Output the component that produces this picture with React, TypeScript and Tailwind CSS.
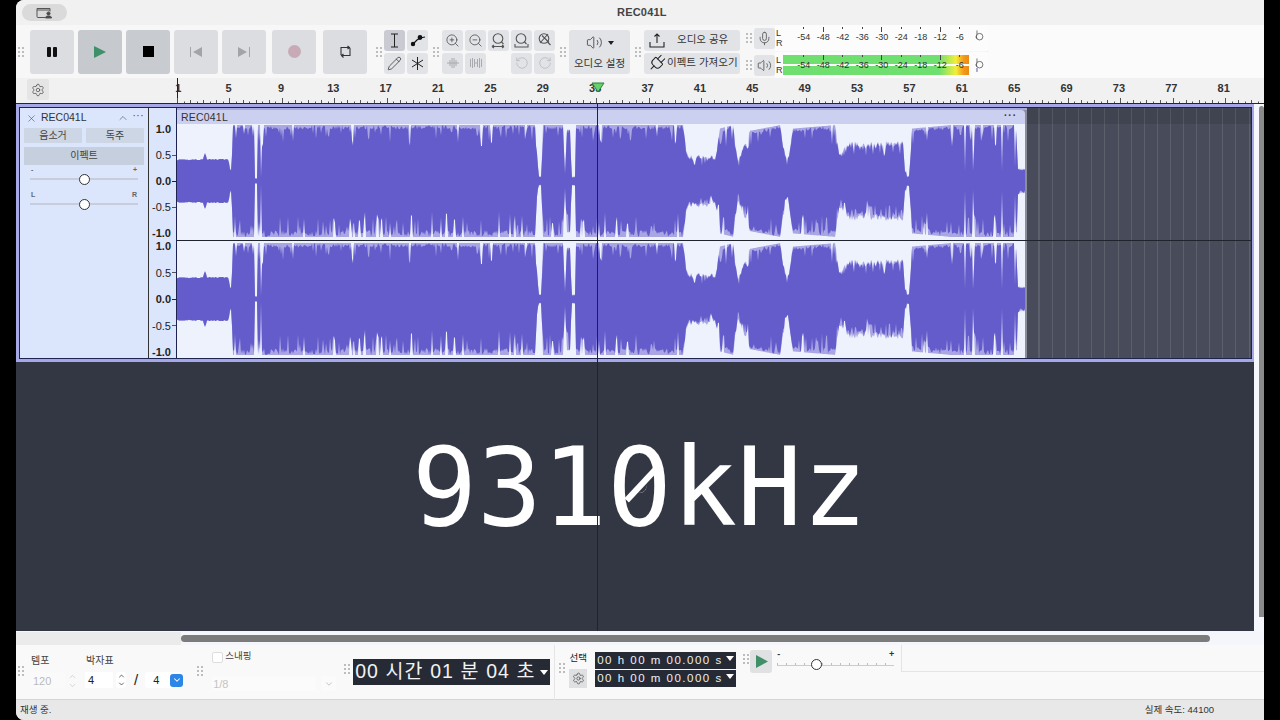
import React from 'react';
import { Mic, Pencil, Plug, RotateCcw, RotateCw, Settings, Volume2, ZoomIn, ZoomOut, ChevronDown, ChevronUp, X } from 'lucide-react';

const SANS = "[font-family:'Liberation_Sans','Noto_Sans_CJK_KR',sans-serif]";

// peak envelope of the clip, x is page pixel, amp is 0..1
const ENVELOPE: [number, number][] = [
  [177, 0.37], [203, 0.38], [205, 0.5], [207, 0.38], [228, 0.38], [231, 0.2], [233, 0.98], [254, 0.98], [255, 0.05], [257, 0.05], [258, 0.98],
  [260, 0.98], [261, 0.05], [262, 0.98], [535, 0.98], [537, 0.5], [539, 0.08], [541, 0.08], [543, 0.98], [563, 0.98],
  [565, 0.14], [567, 0.9], [570, 0.9], [572, 0.08], [575, 0.08], [576, 0.98], [683, 0.98], [687, 0.5], [689, 0.46],
  [716, 0.46], [720, 0.92], [733, 0.98], [738, 0.35], [742, 0.55], [750, 0.88], [780, 0.98], [787, 0.33], [793, 0.92],
  [835, 0.98], [840, 0.46], [848, 0.7], [903, 0.7], [905, 0.3], [907, 0.08], [909, 0.1], [912, 0.92], [950, 0.98],
  [964, 0.98], [965, 0.2], [966, 0.98], [972, 0.98], [973, 0.2], [975, 0.98], [1001, 0.98], [1002, 0.2], [1003, 0.98],
  [1014, 0.98], [1015, 0.25], [1016, 0.9], [1017, 0.9], [1018, 0.24], [1025, 0.22],
];

const envAt = (x: number) => {
  for (let i = 1; i < ENVELOPE.length; i++) {
    const [x1, a1] = ENVELOPE[i];
    if (x <= x1) {
      const [x0, a0] = ENVELOPE[i - 1];
      return a0 + ((a1 - a0) * (x - x0)) / (x1 - x0 || 1);
    }
  }
  return 0.2;
};

let seed = 41;
const rnd = () => {
  seed = (seed * 16807) % 2147483647;
  return seed / 2147483647;
};

const buildWave = () => {
  const lightTop: number[] = [];
  const lightBot: number[] = [];
  const darkTop: number[] = [];
  const darkBot: number[] = [];
  let gapTop = 0;
  let gapBot = 0;
  for (let x = 177; x <= 1025; x++) {
    const env = envAt(x);
    if (x < 229) {
      // quiet intro stays almost flat
      const n = 0.97 + rnd() * 0.05;
      lightTop.push(env * n);
      lightBot.push(env * n);
      darkTop.push(env * n);
      darkBot.push(env * n);
      continue;
    }
    if (gapTop > 0) gapTop--;
    else if (rnd() < 0.04) gapTop = 1 + Math.floor(rnd() * 2);
    if (gapBot > 0) gapBot--;
    else if (rnd() < 0.06) gapBot = 1 + Math.floor(rnd() * 2);
    const tops = gapTop > 0 ? 0.6 + rnd() * 0.2 : 0.92 + rnd() * 0.08;
    const bots = gapBot > 0 ? 0.52 + rnd() * 0.25 : 0.88 + rnd() * 0.12;
    const soft = env < 0.8 ? 0.82 + rnd() * 0.2 : 1;
    lightTop.push(env * soft * (gapTop > 0 ? tops : 1));
    lightBot.push(env * soft * (gapBot > 0 ? bots : 1));
    darkTop.push(env * soft * (rnd() < 0.12 ? 0.68 + rnd() * 0.2 : tops));
    darkBot.push(env * soft * (rnd() < 0.15 ? 0.62 + rnd() * 0.2 : bots));
  }
  const toPath = (top: number[], bot: number[], cy: number) => {
    const a = top.map((v, i) => `${i},${(cy - v * 57).toFixed(1)}`);
    const b = bot.map((v, i) => `${i},${(cy + v * 57).toFixed(1)}`).reverse();
    return `M${a.join('L')}L${b.join('L')}Z`;
  };
  return {
    light: [toPath(lightTop, lightBot, 57), toPath(lightTop, lightBot, 175)].join(''),
    dark: [toPath(darkTop, darkBot, 57), toPath(darkTop, darkBot, 175)].join(''),
  };
};

const WAVE = buildWave();

const Grip = ({ className = '' }: { className?: string }) => (
  <div className={`grid grid-cols-2 gap-x-[2px] gap-y-[2px] w-[6px] h-[10px] shrink-0 ${className}`}>
    {[0, 1, 2, 3, 4, 5].map((i) => (
      <span key={i} className="w-[2px] h-[2px] bg-[#bdbdbd]" />
    ))}
  </div>
);

const BigButton = ({ className = 'bg-[#dcdde1]', children }: { className?: string; children?: React.ReactNode }) => (
  <div className={`w-[44px] h-[44px] rounded-[3px] flex items-center justify-center shrink-0 ${className}`}>{children}</div>
);

const SmallButton = ({ className = 'bg-[#e2e3e6]', children }: { className?: string; children?: React.ReactNode }) => (
  <div className={`w-[21px] h-[21px] rounded-[3px] flex items-center justify-center ${className}`}>{children}</div>
);

const ZoomFit = ({ kind }: { kind: number }) => (
  <svg width="17" height="17" viewBox="0 0 17 17" fill="none" stroke="#555" strokeWidth="1.1">
    <circle cx="8" cy="6.500" r="4.800" />
    {kind === 0 && <path d="M11.500 10l2 2M2 14.500h12M2 14.500l2-1.500M2 14.500l2 1.500M14 14.500l-2-1.500M14 14.500l-2 1.500" />}
    {kind === 1 && <path d="M11.500 10l2 2M2 12v3h13v-3" />}
    {kind === 2 && <path d="M11.500 10l3 3M4 11l8-9M6 3.500l7 7" />}
  </svg>
);

const Meter = ({ playing }: { playing?: boolean }) => {
  const labels = ['-54', '-48', '-42', '-36', '-30', '-24', '-18', '-12', '-6'];
  return (
    <div className="relative h-[26px] w-[213px] bg-[#fcfcfc] flex items-center">
      <div className="w-[7px] ml-px text-[9px] leading-[10px] text-[#333]">
        L<br />R
      </div>
      <div className={`relative w-[202px] h-[20px] ${playing ? '' : '-mt-[3px]'}`}>
        {playing && (
          <div className="absolute inset-y-0 left-0 w-[186px] flex flex-col gap-[2px]">
            <div className="h-[9px] bg-[linear-gradient(90deg,#6fe06f_0,#6fe06f_84%,#f2ef3a_93%,#f59a1a_97%,#e88a15_100%)]" />
            <div className="h-[9px] bg-[linear-gradient(90deg,#6fe06f_0,#6fe06f_84%,#f2ef3a_93%,#f59a1a_97%,#e88a15_100%)]" />
          </div>
        )}
        <div className="absolute inset-0 pl-[11px] flex">
          {labels.map((l, i) => (
            <div key={l} className="w-[19.5px] flex flex-col items-center shrink-0">
              <span className={`w-px bg-[#444] ${i % 3 === 1 ? 'h-[5px]' : 'h-[2px]'}`} />
              <span className={`text-[9px] leading-[11px] text-[#333] ${i % 3 === 1 ? 'mt-0' : 'mt-[3px]'}`}>{l}</span>
            </div>
          ))}
          <svg width="16" height="22" viewBox="0 0 16 22" fill="none" className="-mt-[1px] ml-[5px]" stroke="#333" strokeWidth="1">
            <path d="M3 1v7" />
            <circle cx="7" cy="10.500" r="5" fill="#fcfcfc" />
            <path d="M2.500 8.500a4 4 0 0 0 0 5" />
            {playing && <path d="M3 15.500v6" stroke="#5a55a8" strokeWidth="1.500" />}
          </svg>
        </div>
      </div>
    </div>
  );
};

const Slider = ({ left, right, thumb = 49 }: { left: string; right: string; thumb?: number }) => (
  <div className="px-[10px]">
    <div className="flex justify-between text-[7px] leading-[8px] text-[#666] font-bold px-px">
      <span>{left}</span>
      <span>{right}</span>
    </div>
    <div className="relative h-[10px] flex items-center">
      <div className="w-full h-[2px] bg-[#c6cede]" />
      <div style={{ left: thumb }} className="absolute w-[11px] h-[11px] rounded-full bg-white border border-[#333]" />
    </div>
  </div>
);

const VLabels = ({ items, className }: { items: [string, string][]; className: string }) => (
  <div className={`flex flex-col justify-between ${className}`}>
    {items.map(([t, tick]) => (
      <div key={t} className="h-[12px] flex items-center justify-end">
        <span className={`text-[11px] leading-[12px] text-[#222] ${t.includes('5') ? 'font-medium' : 'font-bold'}`}>{t}</span>
        <span className={`ml-[1px] w-[4px] h-px ${tick}`} />
      </div>
    ))}
  </div>
);

const TimeBox = ({ text }: { text: string }) => (
  <div className="w-[141px] h-[17px] bg-[#262a35] text-[#efefef] flex items-center pl-[2px] text-[11.5px] tracking-[1.5px] leading-none whitespace-nowrap relative">
    {text}
    <span className="absolute right-[2px] top-[4px] w-0 h-0 border-x-[4px] border-x-transparent border-t-[5px] border-t-white" />
  </div>
);

export default function App() {
  const bars = Array.from({ length: 21 }, (_, i) => 1 + i * 4);
  const ticks = Array.from({ length: 166 }, (_, i) => i);

  return (
    <div className={`w-[1280px] h-[720px] bg-black overflow-hidden pl-[16px] pr-[16px] ${SANS}`}>
      <div className="w-[1248px] h-[720px] flex flex-col bg-[#f4f4f4] rounded-tl-[8px] rounded-bl-[8px] overflow-hidden">
        {/* title bar */}
        <div className="h-[25px] bg-[#f1f1f1] flex items-center shrink-0 relative">
          <div className="ml-[6px] w-[45px] h-[17px] rounded-full bg-[#dadada] flex items-center justify-center">
            <svg width="18" height="12" viewBox="0 0 18 12" fill="none" stroke="#555" strokeWidth="1">
              <path d="M9 10.500H2a1 1 0 0 1-1-1v-8h13v3" />
              <path d="M1 3h13" />
              <circle cx="12.500" cy="6.500" r="1.600" fill="#444" />
              <path d="M9.500 11c0-1.500 1-2 3-2s3 .5 3 2z" fill="#444" />
            </svg>
          </div>
          <div className="absolute left-[601px] top-[4px] text-[11px] font-bold text-[#444] tracking-[0.2px]">REC041L</div>
        </div>

        {/* tool bar */}
        <div className="h-[53px] bg-[#f7f7f7] flex items-center shrink-0">
          <Grip className="ml-[2px]" />
          <div className="ml-[6px] flex gap-[4px]">
            <BigButton>
              <svg width="12" height="12" viewBox="0 0 12 12" fill="#111">
                <rect x="1" y="1" width="4" height="10" rx="1" />
                <rect x="7" y="1" width="4" height="10" rx="1" />
              </svg>
            </BigButton>
            <BigButton className="bg-[#c6c9ce]">
              <svg width="14" height="14" viewBox="0 0 14 14" fill="#3f9068">
                <path d="M1 1l12 6-12 6z" />
              </svg>
            </BigButton>
            <BigButton className="bg-[#c8cbd0]">
              <div className="w-[11px] h-[11px] bg-black" />
            </BigButton>
            <BigButton>
              <svg width="14" height="12" viewBox="0 0 14 12" fill="#a2a4a8">
                <rect x="1" y="1" width="1" height="10" />
                <path d="M13 1v10L4 6z" />
              </svg>
            </BigButton>
            <BigButton>
              <svg width="14" height="12" viewBox="0 0 14 12" fill="#a2a4a8">
                <rect x="12" y="1" width="1" height="10" />
                <path d="M1 1v10l9-5z" />
              </svg>
            </BigButton>
          </div>
          <BigButton className="ml-[6px] bg-[#dcdde1]">
            <div className="w-[13px] h-[13px] rounded-full bg-[#c8aab6]" />
          </BigButton>
          <BigButton className="ml-[7px] bg-[#dcdde1]">
            <svg width="15" height="15" viewBox="0 0 15 15" fill="none" stroke="#333" strokeWidth="1.100">
              <path d="M3 11V3.500h8M9.500 2l2 1.500-2 1.500M12 4v7.500H4M5.500 13.500l-2-2 2-1.500" />
            </svg>
          </BigButton>
          <Grip className="ml-[9px]" />
          <div className="ml-[2px] grid grid-cols-2 gap-[2px]">
            <SmallButton className="bg-[#c9cad2]">
              <svg width="13" height="15" viewBox="0 0 13 15" fill="none" stroke="#222" strokeWidth="1">
                <path d="M3 1h7M3 14h7M6.500 1v13" />
              </svg>
            </SmallButton>
            <SmallButton>
              <svg width="16" height="14" viewBox="0 0 16 14" fill="none" stroke="#111" strokeWidth="1.200">
                <path d="M2 12l5-5 3-2 5-1" />
                <circle cx="3" cy="11" r="1.600" fill="#111" />
                <circle cx="10" cy="4.500" r="1.800" fill="#111" />
              </svg>
            </SmallButton>
            <SmallButton>
              <Pencil size={15} strokeWidth={1.1} color="#222" />
            </SmallButton>
            <SmallButton>
              <svg width="15" height="15" viewBox="0 0 15 15" fill="none" stroke="#222" strokeWidth="1">
                <path d="M7.500 1v13M2 4l11 7M13 4L2 11" />
              </svg>
            </SmallButton>
          </div>
          <Grip className="ml-[5px]" />
          <div className="ml-[3px] grid grid-cols-5 gap-[2px]">
            <SmallButton>
              <ZoomIn size={15} strokeWidth={1.2} color="#444" />
            </SmallButton>
            <SmallButton>
              <ZoomOut size={15} strokeWidth={1.2} color="#444" />
            </SmallButton>
            <SmallButton>
              <ZoomFit kind={0} />
            </SmallButton>
            <SmallButton>
              <ZoomFit kind={1} />
            </SmallButton>
            <SmallButton>
              <ZoomFit kind={2} />
            </SmallButton>
            <SmallButton>
              <svg width="14" height="12" viewBox="0 0 14 12" fill="none" stroke="#a8aaae" strokeWidth="1">
                <path d="M1 6h12M4 3v6M6 1v10M8 1v10M10 3v6" />
              </svg>
            </SmallButton>
            <SmallButton>
              <svg width="14" height="12" viewBox="0 0 14 12" fill="none" stroke="#a8aaae" strokeWidth="1">
                <path d="M1.500 2v8M3.500 1v10M5.500 2v8M5.500 6h3M8.500 2v8M10.500 1v10M12.500 2v8" />
              </svg>
            </SmallButton>
            <div />
            <SmallButton>
              <RotateCcw size={14} strokeWidth={1} color="#a8aaae" />
            </SmallButton>
            <SmallButton>
              <RotateCw size={14} strokeWidth={1} color="#a8aaae" />
            </SmallButton>
          </div>
          <Grip className="ml-[5px]" />
          <div className="ml-[3px] w-[61px] h-[44px] rounded-[3px] bg-[#e2e3e6] flex flex-col items-center pt-[3px]">
            <div className="flex items-center gap-[5px] h-[20px]">
              <Volume2 size={17} strokeWidth={1.1} color="#333" />
              <span className="w-0 h-0 border-x-[3px] border-x-transparent border-t-[4px] border-t-[#222]" />
            </div>
            <span className="text-[10.5px] leading-[14px] mt-[3px] text-[#333] whitespace-nowrap">오디오 설정</span>
          </div>
          <Grip className="ml-[5px]" />
          <div className="ml-[3px] flex flex-col gap-[2px]">
            <div className="w-[96px] h-[21px] rounded-[3px] bg-[#e2e3e6] flex items-center pl-[5px]">
              <svg width="16" height="16" viewBox="0 0 16 16" fill="none" stroke="#222" strokeWidth="1.100">
                <path d="M1 10v5h14v-5M8 11V2M5.500 4.500L8 2l2.500 2.500" />
              </svg>
              <span className="ml-[12px] text-[10.5px] text-[#333] whitespace-nowrap">오디오 공유</span>
            </div>
            <div className="w-[96px] h-[21px] rounded-[3px] bg-[#e2e3e6] flex items-center pl-[3px]">
              <Plug size={20} strokeWidth={1.2} color="#222" className="rotate-45" />
              <span className="text-[10.5px] text-[#333] whitespace-nowrap">이펙트 가져오기</span>
            </div>
          </div>
          <div className="ml-[6px] flex flex-col h-full w-[6px] justify-around items-center">
            <Grip />
            <Grip />
          </div>
          <div className="ml-[2px] flex flex-col gap-[6px]">
            <SmallButton>
              <Mic size={15} strokeWidth={1.2} color="#444" />
            </SmallButton>
            <SmallButton>
              <Volume2 size={15} strokeWidth={1.1} color="#333" />
            </SmallButton>
          </div>
          <div className="flex flex-col gap-px">
            <Meter />
            <Meter playing />
          </div>
          <div className="flex-1 h-full bg-[#fbfbfb] border-l border-[#e6e6e6] -ml-px" />
        </div>

        {/* ruler */}
        <div className="h-[26px] bg-[#f1f1f1] border-b border-[#1c2350] relative flex shrink-0">
          <div className="ml-[11px] mt-px w-[22px] h-[21px] bg-[#e5e5e5] rounded-[2px] flex items-center justify-center">
            <Settings size={14} strokeWidth={1.2} color="#444" />
          </div>
          <div className="ml-[101px] flex pt-[4px]">
            {bars.map((b) => (
              <div key={b} className={`w-[52.38px] text-center text-[11px] leading-[13px] font-bold text-[#333] shrink-0 ${b === 1 ? 'pl-[4px]' : ''}`}>
                {b}
              </div>
            ))}
          </div>
          <svg className="absolute left-[160px] top-0" width="1088" height="25" viewBox="0 0 1088 25" stroke="#555" strokeWidth="1">
            <path d="M1.500 0v25" stroke="#222" />
            {ticks.map((i) => {
              const x = Math.round(1 + i * 6.55) + 0.5;
              const h = i % 8 === 0 ? 5 : i % 2 === 0 ? 3 : 1.5;
              return <path key={i} d={`M${x} ${25 - h}V25`} />;
            })}
            <path d="M416 5h12l-6 9z" fill="#64d36a" stroke="#2f7d3b" />
          </svg>
        </div>

        {/* track area and the dark panel */}
        <div className="flex-1 flex min-h-0 relative">
          <div className="w-[1238px] flex flex-col">
            <div className="h-[258px] bg-[#a6a7e6] pt-[3px] pb-[3px] pl-[3px] pr-[2px] shrink-0">
              <div className="h-[252px] border border-[#1c2350] flex">
                <div className="w-[129px] bg-[#dbe5fb] border-r border-[#333] shrink-0 flex flex-col">
                  <div className="h-[18px] mt-[1px] flex items-center pl-[6px] pr-[4px] text-[#444]">
                    <X size={11} strokeWidth={1.2} />
                    <span className="ml-[4px] text-[10.5px] text-[#333]">REC041L</span>
                    <ChevronUp size={12} strokeWidth={1.3} className="ml-auto" color="#555" />
                    <span className="ml-[4px] text-[10px] leading-[8px] tracking-[0.5px] -mt-[4px]">···</span>
                  </div>
                  <div className="mt-px px-[4px] flex gap-[4px]">
                    <div className="flex-1 h-[15px] bg-[#cdd6e4] rounded-[1px] text-[10px] leading-[15px] text-center text-[#444]">음소거</div>
                    <div className="flex-1 h-[15px] bg-[#cdd6e4] rounded-[1px] text-[10px] leading-[15px] text-center text-[#444]">독주</div>
                  </div>
                  <div className="mt-[4px] mx-[4px] h-[18px] bg-[#c5cfde] text-[10px] leading-[18px] text-center text-[#444]">이펙트</div>
                  <div className="mt-[1px]">
                    <Slider left="-" right="+" />
                  </div>
                  <div className="mt-[7px]">
                    <Slider left="L" right="R" />
                  </div>
                </div>
                <div className="w-[27px] bg-[#dbe5fb] shrink-0 flex flex-col">
                  <VLabels
                    className="h-[132px] pt-[15px] pb-px"
                    items={[['1.0', ''], ['0.5', 'bg-[#555]'], ['0.0', 'bg-[#222]'], ['-0.5', 'bg-[#555]'], ['-1.0', '']]}
                  />
                  <VLabels
                    className="h-[118px]"
                    items={[['1.0', ''], ['0.5', 'bg-[#555]'], ['0.0', 'bg-[#222]'], ['-0.5', 'bg-[#555]'], ['-1.0', '']]}
                  />
                </div>
                <div className="flex-1 border-l border-[#1c2350] flex relative bg-[#484c5a] min-w-0">
                  <div className="w-[850px] shrink-0 flex flex-col bg-[#8b8e98] pr-[2px]">
                    <div className="h-[2px] bg-[#a8a9dc] -mr-[2px] shrink-0" />
                    <div className="h-[14px] bg-[#ccd0f0] rounded-tr-[4px] flex items-center justify-between pl-[4px] pr-[8px] shrink-0">
                      <span className="text-[10.5px] leading-[12px] text-[#333] tracking-[0.2px]">REC041L</span>
                      <span className="text-[10px] leading-[6px] -mt-[2px] font-bold tracking-[1px] text-[#333]">···</span>
                    </div>
                    <svg width="848" height="234" viewBox="0 0 848 234" className="block bg-[#eef2fd]">
                      <path d={WAVE.light} fill="#aaa6e4" />
                      <path d={WAVE.dark} fill="#645ccb" />
                    </svg>
                  </div>
                  <div className="flex-1 bg-[repeating-linear-gradient(90deg,#5c606d_0,#5c606d_1px,transparent_1px,transparent_13.1px)] [background-position:12px_0]">
                    <div className="h-[16px] bg-black/10" />
                  </div>
                  <div className="absolute left-0 right-0 top-[132px] h-px bg-[#20242e]" />
                </div>
              </div>
            </div>
            <div className="flex-1 bg-[#333744] pl-[396px] pt-[61px]">
              <span className="relative inline-block text-[108px] leading-[130px] text-white [font-family:'DejaVu_Sans_Mono',monospace]">
                9310kHz
                {/* the installed mono font dots its zero, the reference slashes it */}
                <span className="absolute left-[219px] top-[54px] w-[16px] h-[16px] rounded-full bg-[#333744]" />
                <span className="absolute left-[208px] top-[59px] w-[42px] h-[6px] bg-white -rotate-[47deg]" />
              </span>
            </div>
          </div>
          <div className="flex-1 bg-[#f6f7fc] pl-[5px]">
            <div className="h-[511px] mt-[2px] w-[5px] bg-[#8a8a8a] rounded-t-[3px]" />
          </div>
          <div className="absolute left-[581px] top-0 bottom-0 w-px bg-[#20242e]" />
        </div>

        {/* horizontal scrollbar */}
        <div className="h-[14px] bg-[#f5f6fb] shrink-0 flex">
          <div className="w-[165px] bg-[#ebebeb] mt-px" />
          <div className="w-[1029px] h-[7px] mt-[4px] rounded-full bg-[#7b7b7b]" />
        </div>

        {/* bottom tool bar */}
        <div className="h-[55px] bg-[#f9f9f9] border-b border-[#d4d4d4] flex shrink-0 text-[#444]">
          <Grip className="ml-[2px] mt-[21px]" />
          <div className="ml-[6px] w-[50px] pt-[10px]">
            <div className="text-[10px] leading-[12px] pl-[1px]">템포</div>
            <div className="mt-[5px] flex items-center">
              <div className="w-[35px] h-[16px] pl-[3px] text-[11px] leading-[16px] text-[#bbb] bg-[#fafafa]">120</div>
              <div className="ml-[3px] w-[9px] flex flex-col items-center text-[#bbb]">
                <ChevronUp size={9} strokeWidth={1.5} />
                <ChevronDown size={9} strokeWidth={1.5} />
              </div>
            </div>
          </div>
          <div className="ml-[6px] pt-[10px]">
            <div className="text-[10px] leading-[12px]">박자표</div>
            <div className="mt-[5px] flex items-center -ml-[1px]">
              <div className="w-[28px] h-[16px] bg-white pl-[3px] text-[11px] leading-[16px] text-[#222]">4</div>
              <div className="ml-[3px] w-[10px] h-[16px] bg-white rounded-[3px] flex flex-col items-center justify-center text-[#222]">
                <ChevronUp size={9} strokeWidth={2} />
                <ChevronDown size={9} strokeWidth={2} />
              </div>
              <span className="ml-[8px] text-[15px] leading-[16px] text-[#222]">/</span>
              <div className="ml-[7px] w-[38px] h-[16px] bg-white rounded-[4px] flex items-center pl-[8px] text-[11px] text-[#222]">
                4
                <div className="ml-auto w-[13px] h-[13px] rounded-[3px] bg-[#2b86e8] flex items-center justify-center">
                  <ChevronDown size={10} strokeWidth={2.5} color="white" />
                </div>
              </div>
            </div>
          </div>
          <Grip className="ml-[14px] mt-[21px]" />
          <div className="ml-[9px] w-[126px] pt-[6px]">
            <div className="flex items-center h-[12px]">
              <div className="w-[11px] h-[11px] border border-[#ddd] bg-white rounded-[2px]" />
              <span className="ml-[2px] text-[9.5px] -mt-[2px]">스내핑</span>
            </div>
            <div className="mt-[13px] flex">
              <div className="w-[104px] h-[15px] bg-[#fbfbfb] pl-[1px] text-[11px] leading-[16px] text-[#c4c4c4]">1/8</div>
              <div className="ml-[5px] w-[15px] h-[15px] bg-[#fbfbfb] rounded-[3px] flex items-center justify-center">
                <ChevronDown size={10} color="#bbb" />
              </div>
            </div>
          </div>
          <Grip className="ml-[6px] mt-[19px]" />
          <div className="ml-[3px] mt-[14px] w-[197px] h-[26px] bg-[#262a35] text-[#f2f2f2] flex items-center pl-[2px] text-[19.5px] tracking-[1.1px] whitespace-nowrap relative">
            00 시간 01 분 04 초
            <span className="absolute right-[2px] top-[11px] w-0 h-0 border-x-[4px] border-x-transparent border-t-[5px] border-t-white" />
          </div>
          <div className="ml-[4px] w-px bg-[#e6e6e6] h-[55px]" />
          <Grip className="ml-[4px] mt-[18px]" />
          <div className="ml-[4px] w-[18px] pt-[7px] flex flex-col items-center">
            <span className="text-[9.5px] leading-[12px] whitespace-nowrap text-[#222]">선택</span>
            <div className="mt-[5px] w-[18px] h-[19px] bg-[#dfe0e2] flex items-center justify-center">
              <Settings size={13} strokeWidth={1.3} color="#444" />
            </div>
          </div>
          <div className="ml-[8px] pt-[7px] flex flex-col gap-px">
            <TimeBox text="00 h 00 m 00.000 s" />
            <TimeBox text="00 h 00 m 00.000 s" />
          </div>
          <Grip className="ml-[7px] mt-[9px]" />
          <div className="ml-[1px] mt-[5px] w-[22px] h-[23px] rounded-[3px] bg-[#dfe1e3] flex items-center justify-center">
            <svg width="13" height="13" viewBox="0 0 13 13" fill="#3f9068">
              <path d="M1 0l12 6.500L1 13z" />
            </svg>
          </div>
          <div className="ml-[5px] w-[117px] mt-[5px]">
            <div className="flex justify-between text-[9px] leading-[8px] font-bold text-[#333]">
              <span>-</span>
              <span>+</span>
            </div>
            <div className="relative h-[13px] flex items-center">
              <div className="w-full h-[3px] border-b border-[#c8ccd0] bg-[repeating-linear-gradient(90deg,#bbb_0,#bbb_1px,transparent_1px,transparent_9px)]" />
              <div className="absolute left-[34px] w-[11px] h-[11px] rounded-full bg-white border border-[#333]" />
            </div>
          </div>
          <div className="ml-[7px] w-px h-[27px] bg-[#e4e4e4]" />
          <div className="flex-1 h-[27px] border-b border-[#e4e4e4]" />
        </div>

        {/* status bar */}
        <div className="h-[20px] bg-[#e8e8e9] flex items-center justify-between pl-[4px] pr-[50px] text-[9.5px] text-[#333] shrink-0">
          <span>재생 중.</span>
          <span>실제 속도: 44100</span>
        </div>
      </div>
    </div>
  );
}
